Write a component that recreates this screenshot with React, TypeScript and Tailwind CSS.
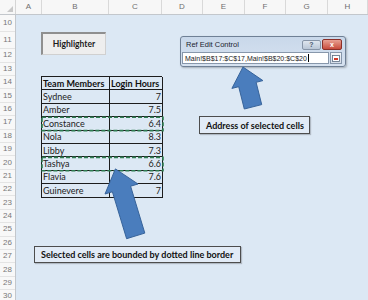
import React from "react";

const columns = [
  { label: "A", w: "w-[26px]" },
  { label: "B", w: "w-[67px]" },
  { label: "C", w: "w-[53px]" },
  { label: "D", w: "w-[41px]" },
  { label: "E", w: "w-[42px]" },
  { label: "F", w: "w-[41px]" },
  { label: "G", w: "w-[42px]" },
  { label: "H", w: "w-[40px]" },
];

const rows = [
  { n: 10, h: "h-[17px]" },
  { n: 11, h: "h-[17.2px]" },
  ...Array.from({ length: 19 }, (_, i) => ({ n: 12 + i, h: "h-[13.4px]" })),
];

const members: [string, string, boolean][] = [
  ["Sydnee", "7", false],
  ["Amber", "7.5", false],
  ["Constance", "6.4", true],
  ["Nola", "8.3", false],
  ["Libby", "7.3", false],
  ["Tashya", "6.6", true],
  ["Flavia", "7.6", false],
  ["Guinevere", "7", false],
];

function Arrows() {
  return (
    <svg className="pointer-events-none absolute left-0 top-0" width="368" height="300" viewBox="0 0 368 300">
      <polygon
        points="243,67 262.9,80.6 256.1,82.3 261.7,104.6 244.3,109 238.7,86.7 231.9,88.4"
        fill="#4a7dbd"
        stroke="#37639a"
        strokeWidth="1"
        strokeLinejoin="round"
      />
      <polygon
        points="115.4,168.9 138,184 130.6,186.2 144.8,233.1 126.6,238.7 112.4,191.8 105,194"
        fill="#4a7dbd"
        stroke="#37639a"
        strokeWidth="1"
        strokeLinejoin="round"
      />
    </svg>
  );
}

function RefEditDialog() {
  return (
    <div className="absolute left-[180px] top-[36px] h-[31px] w-[166px] rounded-[3px] border border-[#6f8095] bg-gradient-to-b from-[#c9d8ea] to-[#d6e2f0] shadow-[1px_1px_2px_rgba(0,0,0,0.25)]">
      <div className="flex h-[15px] items-center justify-between pl-[5px] pr-[3px]">
        <span className="text-[7.5px] leading-none text-[#1b2430] [font-family:'Liberation_Sans',Arial,sans-serif]">
          Ref Edit Control
        </span>
        <div className="flex items-center gap-[1px]">
          <div className="flex h-[10px] w-[19px] items-center justify-center rounded-[2px] border border-[#8795a8] bg-gradient-to-b from-[#dfe6ef] to-[#b9c6d6] text-[7px] font-bold leading-none text-[#4a5a70] [font-family:'Liberation_Sans',Arial,sans-serif]">
            ?
          </div>
          <div className="flex h-[11px] w-[20px] items-center justify-center rounded-[2px] border border-[#8a2f28] bg-gradient-to-b from-[#e8a093] to-[#c74a3c] text-[7px] font-bold leading-none text-white [font-family:'Liberation_Sans',Arial,sans-serif]">
            x
          </div>
        </div>
      </div>
      <div className="flex items-center gap-[1px] pl-[1px] pr-[3px]">
        <div className="flex h-[12px] flex-1 items-center border border-[#8797ab] bg-white pl-[2px]">
          <span className="whitespace-nowrap text-[7px] leading-none text-[#1a1a1a] [font-family:'Liberation_Sans',Arial,sans-serif]">
            Main!$B$17:$C$17,Main!$B$20:$C$20
          </span>
          <span className="ml-[1px] h-[8px] w-[1px] bg-black" />
        </div>
        <div className="flex h-[12px] w-[12px] items-center justify-center border border-[#8797ab] bg-gradient-to-b from-[#f4f6f9] to-[#d5dde8]">
          <svg width="8" height="7" viewBox="0 0 8 7">
            <rect x="0.5" y="0.5" width="7" height="6" fill="#fff" stroke="#5a6b80" strokeWidth="0.8" />
            <rect x="2" y="3" width="4" height="2" fill="#d23a2a" />
          </svg>
        </div>
      </div>
    </div>
  );
}

function Callout({ className, text }: { className: string; text: string }) {
  return (
    <div
      className={`absolute flex items-center border border-[#4d4d4d] bg-[#e2ebf6] pl-[6px] text-[9px] font-bold leading-none text-[#111] shadow-[1px_1px_1px_rgba(0,0,0,0.2)] [font-family:Lato,'Open_Sans',sans-serif] ${className}`}
    >
      {text}
    </div>
  );
}

function MembersTable() {
  return (
    <div className="relative ml-[25px] mt-[61px] w-[121px] border-l border-t border-[#1c1c1c] [font-family:Lato,'Open_Sans',sans-serif]">
      <div className="grid grid-cols-[68px_53px]">
        <div className="flex h-[13.4px] items-center border-b border-r border-[#1c1c1c] pl-[1px] text-[9px] font-bold leading-none text-[#111]">
          Team Members
        </div>
        <div className="flex h-[13.4px] items-center border-b border-r border-[#1c1c1c] pl-[1px] text-[9px] font-bold leading-none text-[#111]">
          Login Hours
        </div>
        {members.map(([name, hours]) => (
          <React.Fragment key={name}>
            <div className="flex h-[13.4px] items-center border-b border-r border-[#1c1c1c] pl-[1px] text-[9px] leading-none text-[#222]">
              {name}
            </div>
            <div className="flex h-[13.4px] items-center justify-end border-b border-r border-[#1c1c1c] pr-[1px] text-[9px] leading-none text-[#222]">
              {hours}
            </div>
          </React.Fragment>
        ))}
      </div>
      <svg className="pointer-events-none absolute -left-[1px] -top-[1px]" width="123" height="123" viewBox="0 0 123 123">
        {members.map(([name, , selected], i) =>
          selected ? (
            <rect
              key={name}
              x="1"
              y={13.4 * (i + 1) + 1}
              width="121"
              height="13.4"
              fill="none"
              stroke="#2f7d52"
              strokeWidth="1.6"
              strokeDasharray="4 2"
            />
          ) : null,
        )}
      </svg>
    </div>
  );
}

export default function App() {
  return (
    <div className="relative h-[300px] w-[368px] overflow-hidden bg-[#dce8f4]">
      <div className="flex h-[15px] border-b border-[#c3c7cc] bg-[#f7f7f7] [font-family:'Liberation_Sans',Arial,sans-serif]">
        <div className="relative w-[16px] border-r border-[#d5d5d5]">
          <div className="absolute bottom-[2px] right-[2px] h-0 w-0 border-b-[6px] border-l-[6px] border-b-[#c8c8c8] border-l-transparent" />
        </div>
        {columns.map((c) => (
          <div
            key={c.label}
            className={`flex shrink-0 items-center justify-center border-r border-[#d9d9d9] text-[8px] text-[#6f6f6f] ${c.w}`}
          >
            {c.label}
          </div>
        ))}
      </div>
      <div className="flex">
        <div className="w-[16px] shrink-0 border-r border-[#c3c7cc] bg-[#f8f8f8] [font-family:'Liberation_Sans',Arial,sans-serif]">
          {rows.map((r) => (
            <div
              key={r.n}
              className={`flex items-center justify-center border-b border-[#e4e4e4] text-[8px] leading-none text-[#777] ${r.h}`}
            >
              {r.n}
            </div>
          ))}
        </div>
        <div className="relative flex-1">
          <MembersTable />
        </div>
      </div>

      <div className="absolute left-[41px] top-[32px] flex h-[23px] w-[65px] items-center justify-center border-l-2 border-t-2 border-b border-r border-l-[#8f8f8f] border-t-[#8f8f8f] border-b-[#d0d0d0] border-r-[#d0d0d0] bg-[#eeeeee] text-[8.5px] font-bold text-[#1c1c1c] [font-family:Lato,'Open_Sans',sans-serif]">
        Highlighter
      </div>

      <RefEditDialog />
      <Arrows />

      <Callout className="left-[199px] top-[116px] h-[18px] w-[111px]" text="Address of selected cells" />
      <Callout className="left-[34px] top-[246px] h-[17px] w-[207px]" text="Selected cells are bounded by dotted line border" />
    </div>
  );
}
